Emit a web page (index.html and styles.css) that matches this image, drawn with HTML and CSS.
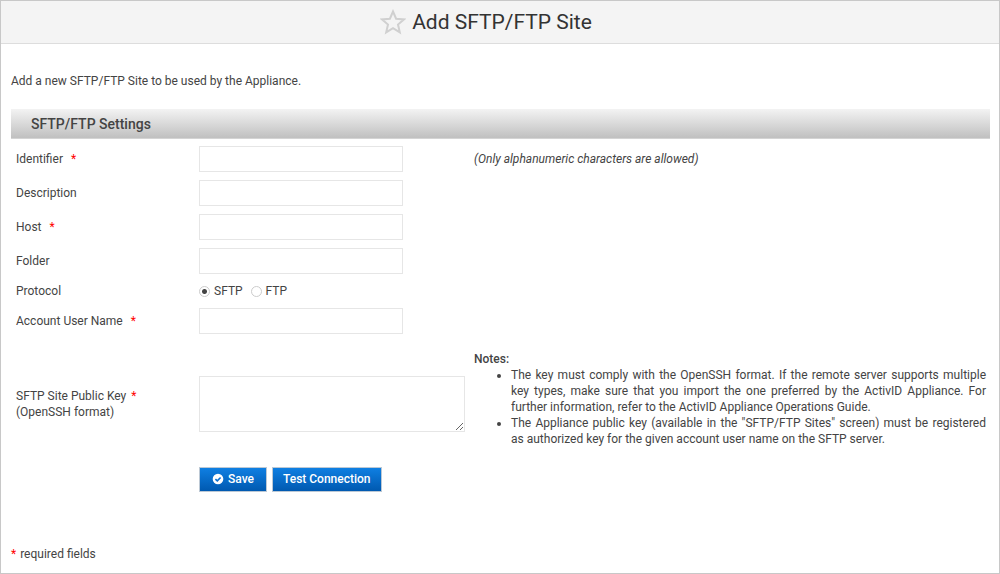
FILE: index.html
```html
<!DOCTYPE html>
<html lang="en">
<head>
  <meta charset="utf-8">
  <title>Add SFTP/FTP Site</title>
  <link rel="stylesheet" href="styles.css">
</head>
<body>
  <div class="page">
    <header class="page-header">
      <svg class="star" viewBox="0 0 26 26" aria-hidden="true">
        <path d="M13 2.5l3.1 7.2 7.8.7-5.9 5.2 1.8 7.7-6.8-4.1-6.8 4.1 1.8-7.7-5.9-5.2 7.8-.7z"/>
      </svg>
      <h1>Add SFTP/FTP Site</h1>
    </header>

    <main class="content">
      <p class="intro">Add a new SFTP/FTP Site to be used by the Appliance.</p>

      <h2 class="section-title">SFTP/FTP Settings</h2>

      <form class="settings">
        <div class="row">
          <label for="identifier">Identifier <span class="required">*</span></label>
          <input class="text" type="text" id="identifier">
          <em class="hint">(Only alphanumeric characters are allowed)</em>
        </div>
        <div class="row">
          <label for="description">Description</label>
          <input class="text" type="text" id="description">
        </div>
        <div class="row">
          <label for="host">Host <span class="required">*</span></label>
          <input class="text" type="text" id="host">
        </div>
        <div class="row">
          <label for="folder">Folder</label>
          <input class="text" type="text" id="folder">
        </div>
        <div class="row row-protocol" role="radiogroup" aria-labelledby="protocol">
          <span id="protocol">Protocol</span>
          <div class="radios">
            <input type="radio" name="protocol" id="sftp" checked>
            <label for="sftp">SFTP</label>
            <input type="radio" name="protocol" id="ftp">
            <label for="ftp">FTP</label>
          </div>
        </div>
        <div class="row">
          <label for="username">Account User Name <span class="required">*</span></label>
          <input class="text" type="text" id="username">
        </div>
        <div class="row row-key">
          <label for="key">SFTP Site Public Key <span class="required tight">*</span><br>(OpenSSH format)</label>
          <textarea id="key"></textarea>
          <div class="notes">
            <strong>Notes:</strong>
            <ul>
              <li>The key must comply with the OpenSSH format. If the remote server supports multiple key types, make sure that you import the one preferred by the ActivID Appliance. For further information, refer to the ActivID Appliance Operations Guide.</li>
              <li>The Appliance public key (available in the "SFTP/FTP Sites" screen) must be registered as authorized key for the given account user name on the SFTP server.</li>
            </ul>
          </div>
        </div>
        <div class="row row-buttons">
          <div class="buttons">
            <button class="save" type="submit">
              <svg class="check" viewBox="0 0 12 12" aria-hidden="true">
                <circle cx="6" cy="6" r="5.3" fill="#fff"/>
                <path d="M3.4 6.1l1.9 1.8 3.3-3.4" fill="none" stroke="#0b6fd0" stroke-width="1.6"/>
              </svg>
              Save
            </button>
            <button type="button">Test Connection</button>
          </div>
        </div>
      </form>

      <p class="legend"><span class="required">*</span> required fields</p>
    </main>
  </div>
</body>
</html>
```
FILE: styles.css
```css
* {
  box-sizing: border-box;
}
body {
  margin: 0;
  background: #fff;
  color: #444;
  font-family: Roboto, "Liberation Sans", sans-serif;
  font-size: 12px;
  line-height: 16px;
}
.page {
  min-height: 100vh;
  border: 1px solid #c8c8c8;
}

.page-header {
  display: flex;
  align-items: center;
  justify-content: center;
  gap: 6px;
  height: 43px;
  padding-right: 28px;
  background: #f4f4f4;
  border-bottom: 1px solid #ddd;
}
.page-header h1 {
  margin: 0;
  color: #333;
  font-size: 21px;
  font-weight: 400;
  line-height: 28px;
}
.star {
  width: 26px;
  height: 26px;
  fill: none;
  stroke: #d0d0d0;
  stroke-width: 2;
}

.content {
  padding: 29px 9px 0 10px;
}
.intro {
  margin: 0 0 20px;
}
.section-title {
  margin: 0;
  padding: 1px 20px 0;
  background: linear-gradient(#f3f3f3, #c0c0c0);
  border-bottom: 1px solid #d4d4d4;
  color: #444;
  font-size: 14px;
  font-weight: 500;
  line-height: 28px;
}

.settings {
  padding: 3px 4px 0 5px;
}
.row {
  display: grid;
  grid-template-columns: 183px 275px 1fr;
  align-items: center;
  min-height: 34px;
}
.row-protocol {
  min-height: 26px;
}
.row-key {
  min-height: 119px;
  padding-top: 13px;
}
.row-buttons {
  margin-top: 5px;
}
.settings .required {
  margin-left: 5px;
}
.settings .required.tight {
  margin-left: 2px;
}
.required {
  margin-right: 1px;
  color: #f00;
}

.text,
textarea {
  padding: 4px;
  background: #fff;
  border: 1px solid #e6e6e6;
  font: inherit;
}
.text {
  width: 204px;
  height: 26px;
}
textarea {
  width: 266px;
  height: 56px;
}

.radios {
  display: flex;
  align-items: center;
}
.radios input {
  appearance: none;
  width: 11px;
  height: 11px;
  margin: 0 4px 0 0;
  background: #fff;
  border: 1px solid #ccc;
  border-radius: 50%;
}
.radios input:checked {
  background: radial-gradient(#444 2px, #fff 3px);
}
.radios label {
  margin-right: 8px;
}

.notes {
  align-self: start;
  text-align: justify;
}
.notes strong {
  font-weight: 500;
}
.notes ul {
  margin: 0;
  padding-left: 37px;
}

.buttons {
  grid-column: 2 / 4;
  display: flex;
  gap: 5px;
}
button {
  display: flex;
  align-items: center;
  gap: 4px;
  height: 25px;
  padding: 0 10px;
  background: linear-gradient(#0f7fe2, #0059b0);
  border: 1px solid #bcc8d4;
  color: #fff;
  font: inherit;
  font-weight: 500;
}
button.save {
  padding: 0 12px;
}
.check {
  width: 12px;
  height: 12px;
}

.legend {
  margin: 50px 0 0;
}
```
